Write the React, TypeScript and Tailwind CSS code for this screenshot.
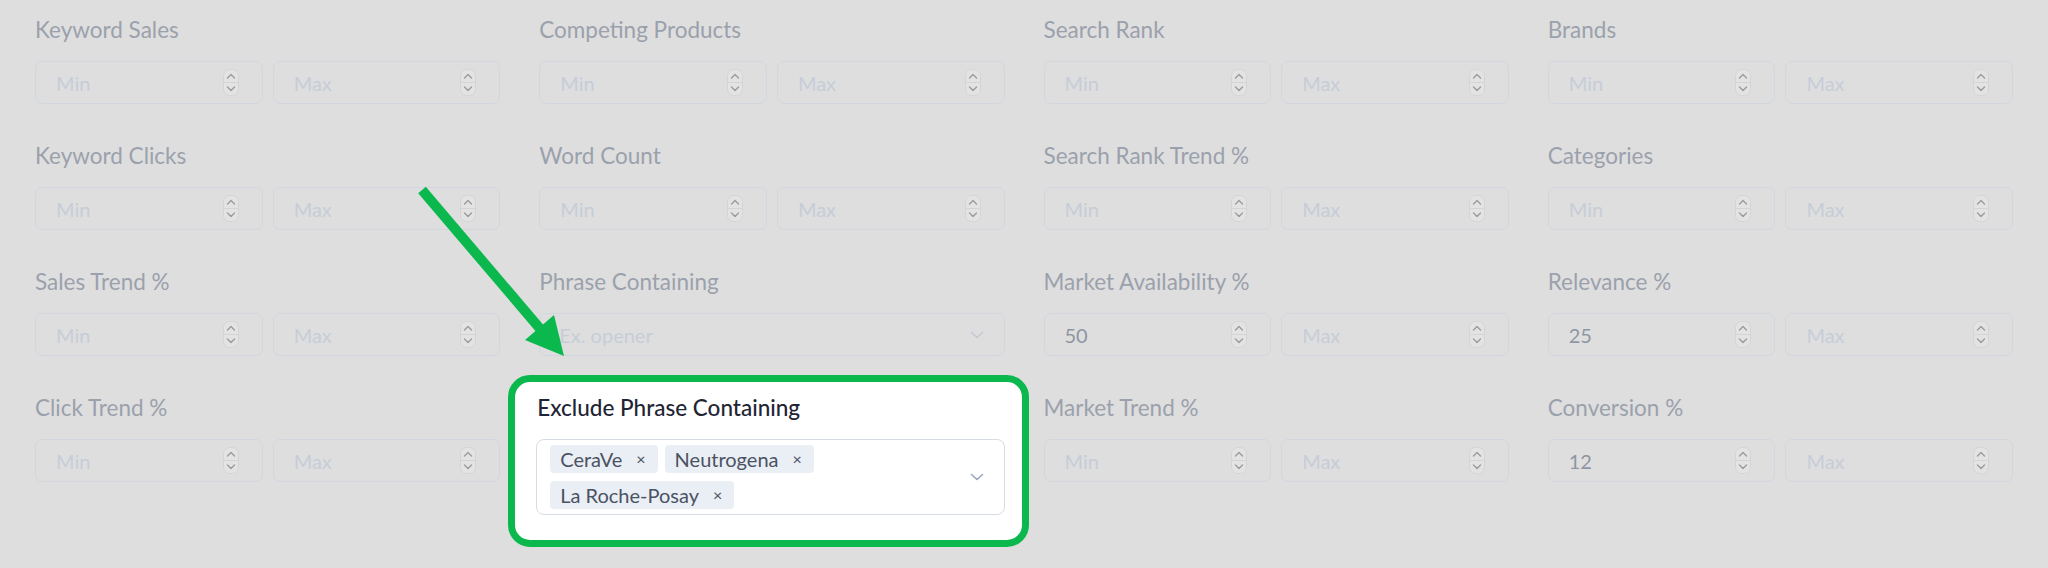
import React from "react";

type Field = {
  label: string;
  kind?: "range" | "select" | "tags";
  min?: string;
  highlight?: boolean;
};

const fields: Field[] = [
  { label: "Keyword Sales" },
  { label: "Competing Products" },
  { label: "Search Rank" },
  { label: "Brands" },
  { label: "Keyword Clicks" },
  { label: "Word Count" },
  { label: "Search Rank Trend %" },
  { label: "Categories" },
  { label: "Sales Trend %" },
  { label: "Phrase Containing", kind: "select" },
  { label: "Market Availability %", min: "50" },
  { label: "Relevance %", min: "25" },
  { label: "Click Trend %" },
  { label: "Exclude Phrase Containing", kind: "tags", highlight: true },
  { label: "Market Trend %" },
  { label: "Conversion %", min: "12" },
];

const tags = ["CeraVe", "Neutrogena", "La Roche-Posay"];

function Stepper() {
  return (
    <svg width="16" height="27" viewBox="0 0 16 27" className="shrink-0">
      <rect x="0.5" y="0.5" width="15" height="26" rx="6" fill="#e3e3e3" stroke="#d4d4d4" />
      <line x1="1" y1="13.5" x2="15" y2="13.5" stroke="#d4d4d4" />
      <path d="M4.5 9 L8 5.5 L11.5 9" fill="none" stroke="#9b9b9b" strokeWidth="1.4" strokeLinecap="round" strokeLinejoin="round" />
      <path d="M4.5 18 L8 21.5 L11.5 18" fill="none" stroke="#9b9b9b" strokeWidth="1.4" strokeLinecap="round" strokeLinejoin="round" />
    </svg>
  );
}

function Chevron({ color }: { color: string }) {
  return (
    <svg width="14" height="8" viewBox="0 0 14 8" className="shrink-0">
      <path d="M1.5 1.5 L7 6.5 L12.5 1.5" fill="none" stroke={color} strokeWidth="1.6" strokeLinecap="round" strokeLinejoin="round" />
    </svg>
  );
}

function NumberBox({ value, placeholder }: { value?: string; placeholder: string }) {
  return (
    <div className="flex h-[43px] flex-1 items-center justify-between rounded-[7px] border border-[#d2d7df] pl-[20px] pr-[23px]">
      {value ? (
        <span className="text-[20px] text-[#8f96a3]">{value}</span>
      ) : (
        <span className="text-[20px] text-[#c7cdd8]">{placeholder}</span>
      )}
      <Stepper />
    </div>
  );
}

function Cell({ field }: { field: Field }) {
  const kind = field.kind ?? "range";
  return (
    <div className="relative">
      {field.highlight && (
        <div className="absolute -top-[19px] -bottom-[32px] -left-[31px] -right-[24px] rounded-[22px] border-[7px] border-[#0bb84e] bg-white" />
      )}
      <div className="relative">
        <div
          className={`text-[22.5px] leading-[28px] ${
            field.highlight ? "-ml-[2px] font-medium text-[#1f2534]" : "text-[#9ba1ac]"
          }`}
        >
          {field.label}
        </div>
        <div className="mt-[17px]">
          {kind === "range" && (
            <div className="flex gap-[10px]">
              <NumberBox value={field.min} placeholder="Min" />
              <NumberBox placeholder="Max" />
            </div>
          )}
          {kind === "select" && (
            <div className="flex h-[43px] items-center justify-between rounded-[7px] border border-[#d2d7df] pl-[19px] pr-[20px]">
              <span className="text-[20px] text-[#c7cdd8]">Ex. opener</span>
              <Chevron color="#c3c9d4" />
            </div>
          )}
          {kind === "tags" && (
            <div className="-ml-[3px] flex h-[76px] items-center rounded-[8px] border border-[#d6dce6] bg-white pl-[13px] pr-[20px]">
              <div className="flex flex-1 flex-wrap gap-x-[7px] gap-y-[8px] pr-[40px]">
                {tags.map((t) => (
                  <span key={t} className="flex h-[28px] items-center rounded-[4px] bg-[#eaeef5] pl-[10px] pr-[12px] text-[20px] text-[#4a5263]">
                    {t}
                    <span className="ml-[14px] text-[16px] text-[#4a5263]">×</span>
                  </span>
                ))}
              </div>
              <Chevron color="#9aa6be" />
            </div>
          )}
        </div>
      </div>
    </div>
  );
}

export default function App() {
  return (
    <div
      className="relative h-[568px] w-[2048px] overflow-hidden bg-[#dedede]"
      style={{ fontFamily: "Lato, 'Open Sans', sans-serif" }}
    >
      <div className="grid grid-cols-4 gap-x-[39px] gap-y-[38px] px-[35px] pt-[16px]">
        {fields.map((f) => (
          <Cell key={f.label} field={f} />
        ))}
      </div>
      <svg className="pointer-events-none absolute left-0 top-0" width="2048" height="568">
        <line x1="422" y1="190" x2="542" y2="331" stroke="#0bb84e" strokeWidth="10" />
        <polygon points="564,356 525,340 554,315" fill="#0bb84e" />
      </svg>
    </div>
  );
}
